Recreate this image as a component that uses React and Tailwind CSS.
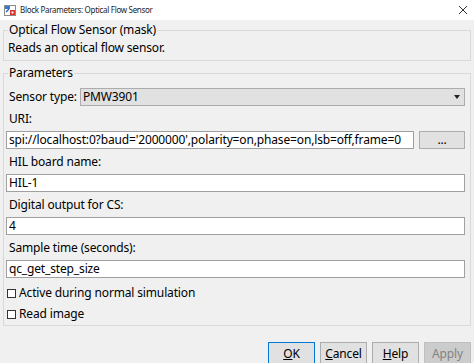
const fields = [
  { label: 'HIL board name:', value: 'HIL-1' },
  { label: 'Digital output for CS:', value: '4' },
  { label: 'Sample time (seconds):', value: 'qc_get_step_size' },
];

function BlockIcon() {
  return (
    <svg width="12" height="12" viewBox="0 0 12 12">
      <rect x="0.5" y="1.5" width="11" height="10" fill="#ffffff" stroke="#8a8a8a" />
      <path d="M1 2 L6 2 L6 5 L1 5 Z" fill="#3a7bd5" />
      <path d="M2 8 L5 5" stroke="#1f5fb8" strokeWidth="1.2" />
      <rect x="6" y="6" width="5" height="5" fill="#d9342b" />
      <rect x="7.5" y="7.5" width="2" height="2" fill="#ffffff" />
    </svg>
  );
}

function Field({ label, value }) {
  return (
    <div className="mt-[4px]">
      <div className="h-[18px] leading-[18px] pl-[3px] mb-[3px] whitespace-nowrap">{label}</div>
      <div className="h-[18px] border border-[#a0a0a0] bg-white pl-[2px] leading-[16px] whitespace-nowrap overflow-hidden">
        {value}
      </div>
    </div>
  );
}

function Check({ label }) {
  return (
    <div className="h-[18px] flex items-center gap-[3px] pl-[1px]">
      <span className="w-[9px] h-[9px] border border-[#333333] bg-white shrink-0" />
      <span className="leading-[18px] whitespace-nowrap">{label}</span>
    </div>
  );
}

function Btn({ children, primary, disabled }) {
  return (
    <div
      className={`w-[47px] h-[23px] flex items-center justify-center border ${
        primary
          ? 'border-[#0078d7] bg-[#e1e1e1] text-black'
          : disabled
          ? 'border-[#bfbfbf] bg-[#cccccc] text-[#838383]'
          : 'border-[#adadad] bg-[#e1e1e1] text-black'
      }`}
    >
      {children}
    </div>
  );
}

export default function App() {
  return (
    <div className="w-[474px] h-[363px] overflow-hidden bg-[#f0f0f0] font-['Noto_Sans',sans-serif] text-[12px] tracking-[-0.15px] text-black">
      {/* title bar */}
      <div className="h-[20px] bg-white flex items-center pl-[4px] pr-[6px]">
        <BlockIcon />
        <span className="ml-[4px] text-[8px] tracking-[-0.3px] text-[#222222] leading-none whitespace-nowrap">
          Block Parameters: Optical Flow Sensor
        </span>
        <svg className="ml-auto" width="10" height="10" viewBox="0 0 10 10">
          <path d="M1 1 L9 9 M9 1 L1 9" stroke="#333333" strokeWidth="1" />
        </svg>
      </div>

      <div className="px-[3px]">
        {/* mask description */}
        <fieldset className="min-w-0 border border-[#d9d9d9] pl-[4px] pb-[3px] mt-[1px]">
          <legend className="px-[1px] leading-[18px]">Optical Flow Sensor (mask)</legend>
          <p className="leading-[18px]">Reads an optical flow sensor.</p>
        </fieldset>

        {/* parameters */}
        <fieldset className="min-w-0 border border-[#d9d9d9] pl-[2px] pr-[5px] pt-[6px] pb-[2px] mt-[3px]">
          <legend className="ml-[2px] px-[1px] leading-[18px]">Parameters</legend>

          <div className="h-[18px] flex items-center">
            <div className="w-[74px] shrink-0 pl-[3px] leading-[18px] whitespace-nowrap">Sensor type:</div>
            <div className="flex-1 min-w-0 h-[18px] border border-[#acacac] bg-[#e1e1e1] flex items-center pl-[2px] pr-[4px]">
              <span className="leading-[16px]">PMW3901</span>
              <svg className="ml-auto" width="6" height="4" viewBox="0 0 6 4">
                <path d="M0 0 L6 0 L3 4 Z" fill="#222222" />
              </svg>
            </div>
          </div>

          <div className="mt-[4px]">
            <div className="h-[18px] leading-[18px] pl-[3px] mb-[3px]">URI:</div>
            <div className="flex gap-[5px]">
              <div className="flex-1 min-w-0 h-[18px] border border-[#a0a0a0] bg-white pl-[2px] leading-[16px] whitespace-nowrap overflow-hidden">
                spi://localhost:0?baud='2000000',polarity=on,phase=on,lsb=off,frame=0
              </div>
              <div className="w-[46px] shrink-0 h-[18px] border border-[#adadad] bg-[#e1e1e1] flex items-center justify-center leading-[16px]">
                ...
              </div>
            </div>
          </div>

          {fields.map(f => (
            <Field key={f.label} label={f.label} value={f.value} />
          ))}

          <div className="mt-[6px] flex flex-col gap-[3px]">
            <Check label="Active during normal simulation" />
            <Check label="Read image" />
          </div>
        </fieldset>

        {/* buttons */}
        <div className="mt-[16px] flex justify-end gap-[5px]">
          <Btn primary><span><span className="underline">O</span>K</span></Btn>
          <Btn><span><span className="underline">C</span>ancel</span></Btn>
          <Btn><span><span className="underline">H</span>elp</span></Btn>
          <Btn disabled>Apply</Btn>
        </div>
      </div>
    </div>
  );
}
